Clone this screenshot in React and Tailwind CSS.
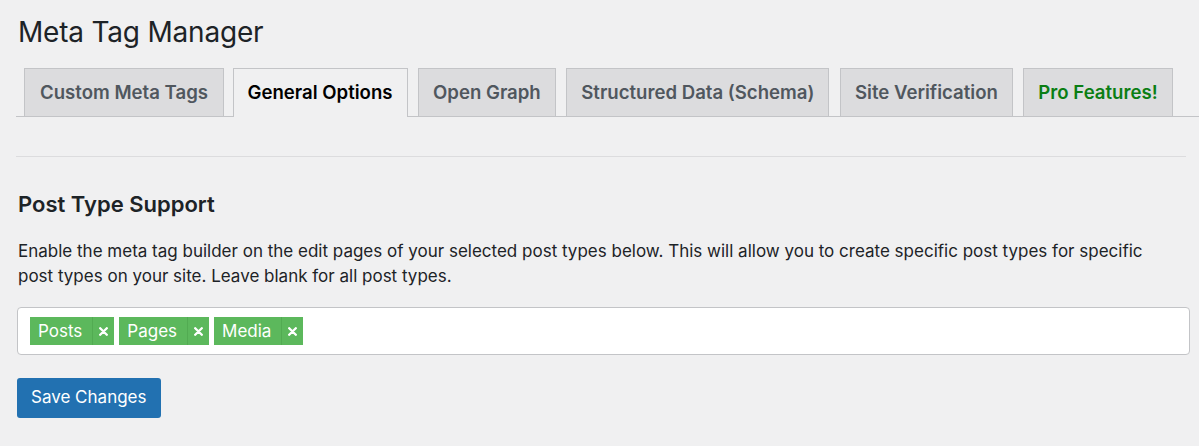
import React from "react";

const tabs = [
  { label: "Custom Meta Tags" },
  { label: "General Options", active: true },
  { label: "Open Graph" },
  { label: "Structured Data (Schema)" },
  { label: "Site Verification" },
  { label: "Pro Features!", pro: true },
];

function Tag({ label }) {
  return (
    <div className="flex h-[28px] items-stretch bg-[#5cb85c] text-white">
      <span className="flex items-center pl-[8px] pr-[10px] text-[17px] leading-none">{label}</span>
      <span className="flex w-[22px] items-center justify-center border-l border-[#52ab52]">
        <svg width="9" height="9" viewBox="0 0 9 9" fill="none">
          <path d="M1.2 1.2L7.8 7.8M7.8 1.2L1.2 7.8" stroke="white" strokeWidth="2.3" strokeLinecap="round" />
        </svg>
      </span>
    </div>
  );
}

export default function App() {
  return (
    <div
      className="min-h-[446px] w-[1199px] bg-[#f0f0f1] text-[#1d2327]"
      style={{ fontFamily: "Inter, 'Noto Sans', sans-serif" }}
    >
      <div className="pl-[18px] pt-[15px]">
        <h1 className="text-[28px] font-normal leading-[34px] tracking-[-0.2px]">Meta Tag Manager</h1>
      </div>
      <div className="mt-[19px] ml-[16px] flex border-b border-[#c3c4c7] pl-[8px]">
        {tabs.map((t, i) => (
          <div
            key={t.label}
            className={
              t.active
                ? "mr-[10.5px] -mb-px flex h-[49px] items-center border border-b-0 border-[#c3c4c7] bg-[#f0f0f1] px-[14px] text-[18.6px] font-semibold text-[#000]"
                : "flex h-[48px] items-center border border-b-0 border-[#c3c4c7] bg-[#dcdcde] text-[18.6px] font-semibold " +
                  (i === 0 ? "mr-[8.5px] pl-[15px] pr-[15px] " : "mr-[10.5px] px-[14px] ") +
                  (t.pro ? "text-[#0b7e14]" : "text-[#50575e]")
            }
          >
            {t.label}
          </div>
        ))}
      </div>
      <div className="ml-[16px] mr-[13px] mt-[39px] border-t border-[#dcdcde]" />
      <div className="pl-[18px] pr-[9px]">
        <h2 className="mt-[34px] text-[22px] font-semibold leading-[26px]">Post Type Support</h2>
        <p className="mt-[22px] w-[1160px] text-[17px] leading-[25px] text-[#1d2327]">
          Enable the meta tag builder on the edit pages of your selected post types below. This will allow you to create specific post types for specific post types on your site. Leave blank for all post types.
        </p>
        <div className="-ml-px mt-[18px] flex h-[48px] items-center gap-[5px] rounded-[4px] border border-[#c3c4c7] bg-white pl-[12px]">
          <Tag label="Posts" />
          <Tag label="Pages" />
          <Tag label="Media" />
        </div>
        <button className="-ml-px mt-[23px] flex h-[40px] items-center rounded-[3px] bg-[#2271b1] px-[14px] text-[17px] text-white">
          Save Changes
        </button>
      </div>
    </div>
  );
}
